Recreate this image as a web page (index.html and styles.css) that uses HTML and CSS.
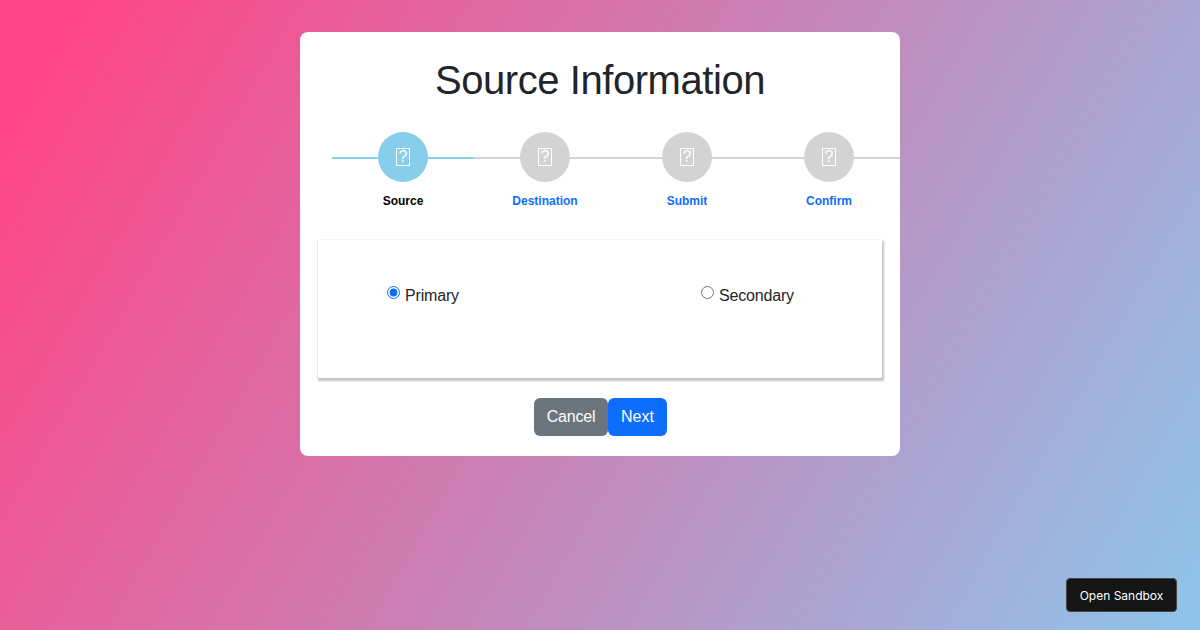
FILE: index.html
```html
<!DOCTYPE html>
<html lang="en">
<head>
  <meta charset="UTF-8">
  <title>Source Information</title>
  <link rel="stylesheet" href="styles.css">
</head>
<body>
  <div class="card">
    <h1 class="title">Source Information</h1>
    <ul class="steps">
      <li class="step active"><span class="dot"><i class="tofu">?</i></span><a class="label">Source</a></li>
      <li class="step"><span class="dot"><i class="tofu">?</i></span><a class="label">Destination</a></li>
      <li class="step"><span class="dot"><i class="tofu">?</i></span><a class="label">Submit</a></li>
      <li class="step"><span class="dot"><i class="tofu">?</i></span><a class="label">Confirm</a></li>
    </ul>
    <div class="panel">
      <label class="choice"><input type="radio" name="kind" checked>Primary</label>
      <label class="choice"><input type="radio" name="kind">Secondary</label>
    </div>
    <div class="actions">
      <button class="btn btn-cancel">Cancel</button>
      <button class="btn btn-next">Next</button>
    </div>
  </div>
  <button class="sandbox">Open Sandbox</button>
</body>
</html>
```

FILE: styles.css
```css
html, body {
  margin: 0;
  padding: 0;
  height: 100%;
  overflow: hidden;
}
body {
  background: linear-gradient(120deg, #ff4586 5%, #8ec5ea 100%);
  font-family: Helvetica, "Liberation Sans", sans-serif;
  font-size: 16px;
  color: #212529;
  display: flex;
  justify-content: center;
  align-items: flex-start;
}
.card {
  width: 600px;
  margin-top: 32px;
  padding-bottom: 20px;
  background: #fff;
  border-radius: 8px;
}
.title {
  margin: 0;
  padding-top: 24px;
  font-size: 40px;
  line-height: 48px;
  font-weight: 400;
  letter-spacing: -0.011em;
  text-align: center;
}
.steps {
  display: flex;
  list-style: none;
  margin: 28px 0 0;
  padding: 0 0 0 32px;
}
.step {
  width: 142px;
  display: flex;
  flex-direction: column;
  align-items: center;
  background: linear-gradient(#d3d3d3, #d3d3d3) no-repeat 0 25px / 100% 2px;
}
.step.active {
  background-image: linear-gradient(#87ceeb, #87ceeb);
}
.dot {
  width: 50px;
  height: 50px;
  border-radius: 50%;
  background: #d3d3d3;
  color: #fff;
  display: flex;
  justify-content: center;
  align-items: center;
}
.active .dot {
  background: #87ceeb;
}
.tofu {
  box-sizing: border-box;
  width: 14px;
  height: 18px;
  border: 1.5px solid #fff;
  font-size: 16px;
  font-style: normal;
  line-height: 15px;
  text-align: center;
}
.label {
  margin-top: 12px;
  font-size: 12px;
  line-height: 15px;
  font-weight: 700;
  color: #0d6efd;
}
.active .label {
  color: #000;
}
.panel {
  display: flex;
  height: 138px;
  margin: 31px 18px 0;
  box-sizing: border-box;
  padding: 46px 0 0 69px;
  background: #fff;
  box-shadow: 1px 2px 2px 1px #c4c4c4, 0 0 1px #ddd;
}
.choice {
  flex: none;
  width: 314px;
  color: #212529;
  line-height: 20px;
  letter-spacing: -0.011em;
}
.choice input {
  margin: 0 5px 0 0;
  width: 13px;
  height: 13px;
  vertical-align: 2px;
  accent-color: #0d6efd;
}
.actions {
  display: flex;
  justify-content: center;
  margin-top: 20px;
  padding-left: 1px;
}
.btn {
  font: 16px/24px Helvetica, "Liberation Sans", sans-serif;
  padding: 6px 0;
  border: 1px solid transparent;
  border-radius: 6px;
  color: #fff;
}
.btn-cancel {
  width: 74px;
  background: #6c757d;
  letter-spacing: -0.011em;
}
.btn-next {
  width: 59px;
  background: #0d6efd;
}
.sandbox {
  position: fixed;
  right: 23px;
  bottom: 18px;
  width: 111px;
  height: 34px;
  padding: 0;
  font: 12px "Inter", sans-serif;
  color: #fff;
  background: #151515;
  border: 1px solid #444;
  border-radius: 4px;
}
```
